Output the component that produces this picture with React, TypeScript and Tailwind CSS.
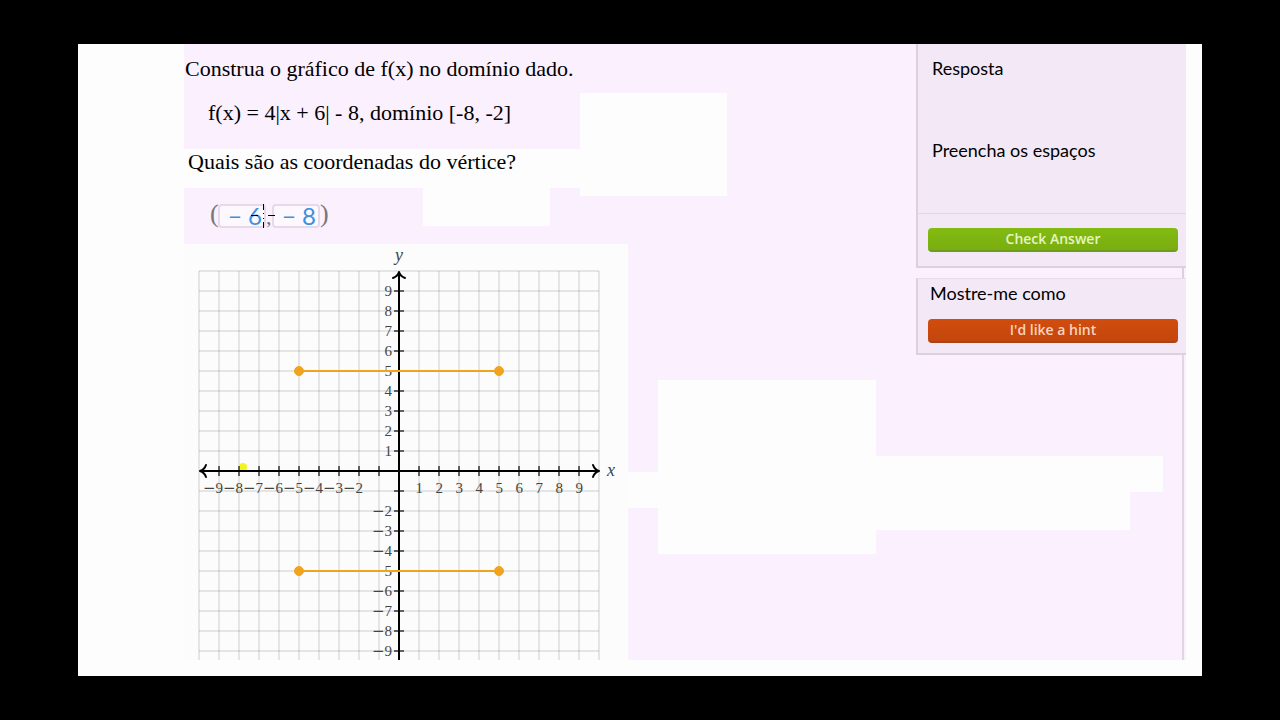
const UNIT = 20;
const GRID_COLS = Array.from({ length: 21 }, (_, i) => i - 10);
const GRID_ROWS = Array.from({ length: 20 }, (_, i) => i - 10);
const LABELS = [-9, -8, -7, -6, -5, -4, -3, -2, 1, 2, 3, 4, 5, 6, 7, 8, 9];

// blank areas of the board, relative to its top left corner
const PATCHES = [
  "left-[396px] top-[49px] h-[103px] w-[147px]",
  "left-[239px] top-[144px] h-[38px] w-[127px]",
  "left-[444px] top-[428px] h-9 w-[30px]",
  "left-[474px] top-[336px] h-[174px] w-[218px]",
  "left-[692px] top-[412px] h-9 w-[287px]",
  "left-[692px] top-[448px] h-[38px] w-[254px]",
];

function TickLabel({ value }: { value: number }) {
  return (
    <>
      {value < 0 && <tspan fontFamily="DejaVu Serif, serif">−</tspan>}
      {Math.abs(value)}
    </>
  );
}

function Segment({ y }: { y: number }) {
  return (
    <g fill="#f0a31c" stroke="#f0a31c">
      <line x1={-5 * UNIT} x2={5 * UNIT} y1={-y * UNIT} y2={-y * UNIT} strokeWidth="2" />
      <circle cx={-5 * UNIT} cy={-y * UNIT} r="4.5" />
      <circle cx={5 * UNIT} cy={-y * UNIT} r="4.5" />
    </g>
  );
}

function Graph() {
  return (
    <svg viewBox="-215 -227 444 416" width="444" height="416" className="block bg-[#fcfcfc]" role="img" aria-label="Plano cartesiano">
      <g stroke="#000" strokeOpacity="0.12" strokeWidth="1.5">
        {GRID_COLS.map((n) => (
          <line key={n} x1={n * UNIT} x2={n * UNIT} y1={-200} y2={189} />
        ))}
        {GRID_ROWS.map((n) => (
          <line key={n} x1={-200} x2={200} y1={n * UNIT} y2={n * UNIT} />
        ))}
      </g>
      <circle cx="-156" cy="-4" r="4" fill="#f2f51d" />
      <g stroke="#333" strokeWidth="1.5">
        {GRID_COLS.slice(1, -1).map((n) => (
          <line key={n} x1={n * UNIT} x2={n * UNIT} y1={-5} y2={5} />
        ))}
        {GRID_ROWS.slice(1).map((n) => (
          <line key={n} x1={-5} x2={5} y1={n * UNIT} y2={n * UNIT} />
        ))}
      </g>
      <g stroke="#000" strokeWidth="2" fill="none" strokeLinecap="round" strokeLinejoin="round">
        <path d="M-198 0H198M0 -198V189" />
        <path d="M-193 -6C-194 -3 -196 -1 -199 0C-196 1 -194 3 -193 6" />
        <path d="M194 -6C195 -3 197 -1 200 0C197 1 195 3 194 6" />
        <path d="M-6 -193C-3 -194 -1 -196 0 -199C1 -196 3 -194 6 -193" />
      </g>
      <g fill="#444" fontFamily="Liberation Serif, serif" fontSize="15" textAnchor="end">
        {LABELS.map((n) => (
          <text key={n} x={n * UNIT + 4} y={22}>
            <TickLabel value={n} />
          </text>
        ))}
        {LABELS.map((n) => (
          <text key={n} x={-7} y={-n * UNIT + 5}>
            <TickLabel value={n} />
          </text>
        ))}
      </g>
      <Segment y={5} />
      <Segment y={-5} />
      <g fill="#444" fontFamily="Liberation Serif, serif" fontSize="18" fontStyle="italic" textAnchor="middle">
        <text x="0" y="-210">y</text>
        <text x="212" y="5">x</text>
      </g>
    </svg>
  );
}

function Crosshair() {
  return (
    <svg viewBox="0 0 26 26" width="26" height="26" className="absolute left-[66px] top-[15px]" aria-hidden="true">
      <path d="M13.5 1V25" stroke="#fff" strokeWidth="1" />
      <path d="M13.5 1V7M13.5 10V11M13.5 15V16M13.5 19V25M1 12.5H8M18 12.5H25" stroke="#000" strokeWidth="1" />
    </svg>
  );
}

function Coordinate({ label, value }: { label: string; value: string }) {
  return (
    <input
      aria-label={label}
      defaultValue={value}
      className="h-6 w-12 rounded-sm border-2 border-[#e6d9ea] bg-[#fcf8fe] pb-0.5 pr-0.5 text-right font-['Lato',sans-serif] text-2xl leading-5 text-[#3d90dc]"
    />
  );
}

export default function App() {
  return (
    <div className="flex min-h-screen flex-col bg-black px-[78px] py-11 text-black">
      <div className="flex grow bg-[#fdfdfd] pb-4 pl-[106px] pr-4">
        <div className="relative flex grow justify-between bg-[#fbf0fe]">
          {PATCHES.map((p) => (
            <div key={p} className={`absolute bg-[#fdfdfd] ${p}`} />
          ))}

          <main className="relative font-['Liberation_Serif',serif] text-[22px]">
            <p className="h-12 pl-px leading-[50px]">Construa o gráfico de f(x) no domínio dado.</p>
            <p className="h-10 pl-6 leading-[42px]">f(x) = 4|x + 6| - 8, domínio [-8, -2]</p>
            <p className="mt-[17px] h-[39px] w-[396px] bg-[#fdfdfd] pl-1 leading-[26px]">Quais são as coordenadas do vértice?</p>
            <div className="relative flex h-14 items-center pl-[26px]">
              <span className="w-2 pb-1 text-[26px] leading-7 text-[#777]">(</span>
              <Coordinate label="Coordenada x" value="− 6" />
              <span className="w-1.5 text-[#777]">,</span>
              <Coordinate label="Coordenada y" value="− 8" />
              <span className="pb-1 text-[26px] leading-7 text-[#777]">)</span>
              <Crosshair />
            </div>
            <Graph />
          </main>

          <aside className="relative flex w-[270px] shrink-0 flex-col font-['Lato',sans-serif] text-lg">
            <section className="border-b-2 border-l-2 border-[#dccfe0] bg-[#f3e8f5]">
              <div className="flex h-[170px] flex-col gap-[54px] border-b border-[#e2d5e5] pl-3.5 pt-2.5">
                <h2 className="leading-7">Resposta</h2>
                <p className="leading-7">Preencha os espaços</p>
              </div>
              <div className="pb-3.5 pl-2.5 pr-2 pt-3.5">
                <button className="block h-6 w-full rounded-sm border-b-2 border-[#6f9c1a] bg-linear-to-b from-[#83bb12] to-[#79ad10] font-['Open_Sans',sans-serif] text-sm leading-5 font-semibold text-[#e5f5c0]">
                  Check Answer
                </button>
              </div>
            </section>
            <div className="mr-0.5 h-2.5 border-r-2 border-[#ddcfe0]" />
            <section className="border-b-2 border-l-2 border-t border-[#dccfe0] border-t-[#e8dcea] bg-[#f3e8f5] pb-2.5 pl-2.5 pr-2">
              <h2 className="pl-0.5 leading-7">Mostre-me como</h2>
              <button className="mt-3 block h-6 w-full rounded-sm border-b-2 border-[#a8441a] bg-linear-to-b from-[#d04d0d] to-[#c4460d] font-['Open_Sans',sans-serif] text-sm leading-5 font-semibold text-[#fbd3bd]">
                I'd like a hint
              </button>
            </section>
            <div className="mr-0.5 grow border-r-2 border-[#e2d5e5]" />
          </aside>
        </div>
      </div>
    </div>
  );
}
